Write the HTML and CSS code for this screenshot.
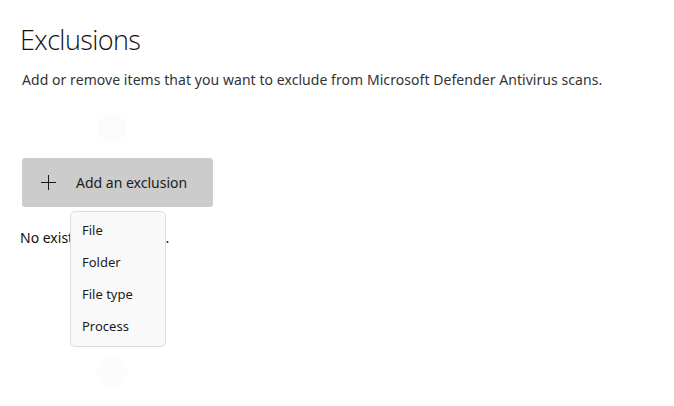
FILE: index.html
```html
<!DOCTYPE html>
<html lang="en">
<head>
<meta charset="utf-8">
<title>Exclusions</title>
<link rel="stylesheet" href="styles.css">
</head>
<body>
<main class="page">
  <h1 class="title">Exclusions</h1>
  <p class="desc">Add or remove items that you want to exclude from Microsoft Defender Antivirus scans.</p>
  <div class="actions">
    <button class="add-btn" type="button">
      <svg class="plus" width="15" height="15" viewBox="0 0 15 15" aria-hidden="true">
        <path d="M7.5 0V15M0 7.5H15" stroke="#1a1a1a" stroke-width="1" fill="none"/>
      </svg>
      <span>Add an exclusion</span>
    </button>
    <ul class="menu">
      <li>File</li>
      <li>Folder</li>
      <li>File type</li>
      <li>Process</li>
    </ul>
  </div>
  <p class="empty">No existing exclusions.</p>
</main>
<span class="ghost ghost-top"></span>
<span class="ghost ghost-bottom"></span>
</body>
</html>
```
FILE: styles.css
```css
html, body {
  margin: 0;
  padding: 0;
  background: #ffffff;
}
body {
  font-family: "Noto Sans", "Open Sans", sans-serif;
  color: #1b1b1b;
  width: 674px;
  height: 406px;
  overflow: hidden;
  position: relative;
}
.page {
  padding: 22px 0 0 20px;
  display: flex;
  flex-direction: column;
  align-items: flex-start;
}
.title {
  margin: 0;
  font-family: "Open Sans", sans-serif;
  font-weight: 300;
  font-size: 27px;
  line-height: 36px;
  color: #111;
  letter-spacing: -0.6px;
}
.desc {
  margin: 12px 0 0 2px;
  font-size: 14px;
  line-height: 20px;
  color: #333;
  letter-spacing: 0.06px;
}
.actions {
  position: relative;
  margin: 68px 0 0 2px;
}
.add-btn {
  display: flex;
  align-items: center;
  gap: 20px;
  width: 191px;
  height: 49px;
  padding: 0 0 0 19px;
  border: none;
  border-radius: 3px;
  background: #cccccc;
  font-family: inherit;
  font-size: 14px;
  color: #1b1b1b;
  cursor: default;
}
.plus {
  flex: none;
}
.menu {
  position: absolute;
  left: 48px;
  top: 53px;
  width: 94px;
  margin: 0;
  padding: 6px 0 0;
  list-style: none;
  background: #f9f9f9;
  border: 1px solid #dcdcdc;
  border-radius: 5px;
  box-sizing: content-box;
  height: 128px;
  z-index: 2;
}
.menu li {
  height: 32px;
  line-height: 24px;
  padding-left: 11px;
  font-size: 13px;
  color: #1b1b1b;
}
.empty {
  margin: 21px 0 0;
  font-size: 14px;
  line-height: 20px;
  color: #111;
}
.ghost {
  position: absolute;
  width: 30px;
  height: 30px;
  border-radius: 50%;
  background: #fcfcfc;
}
.ghost-top { left: 97px; top: 113px; }
.ghost-bottom { left: 97px; top: 357px; }
```
